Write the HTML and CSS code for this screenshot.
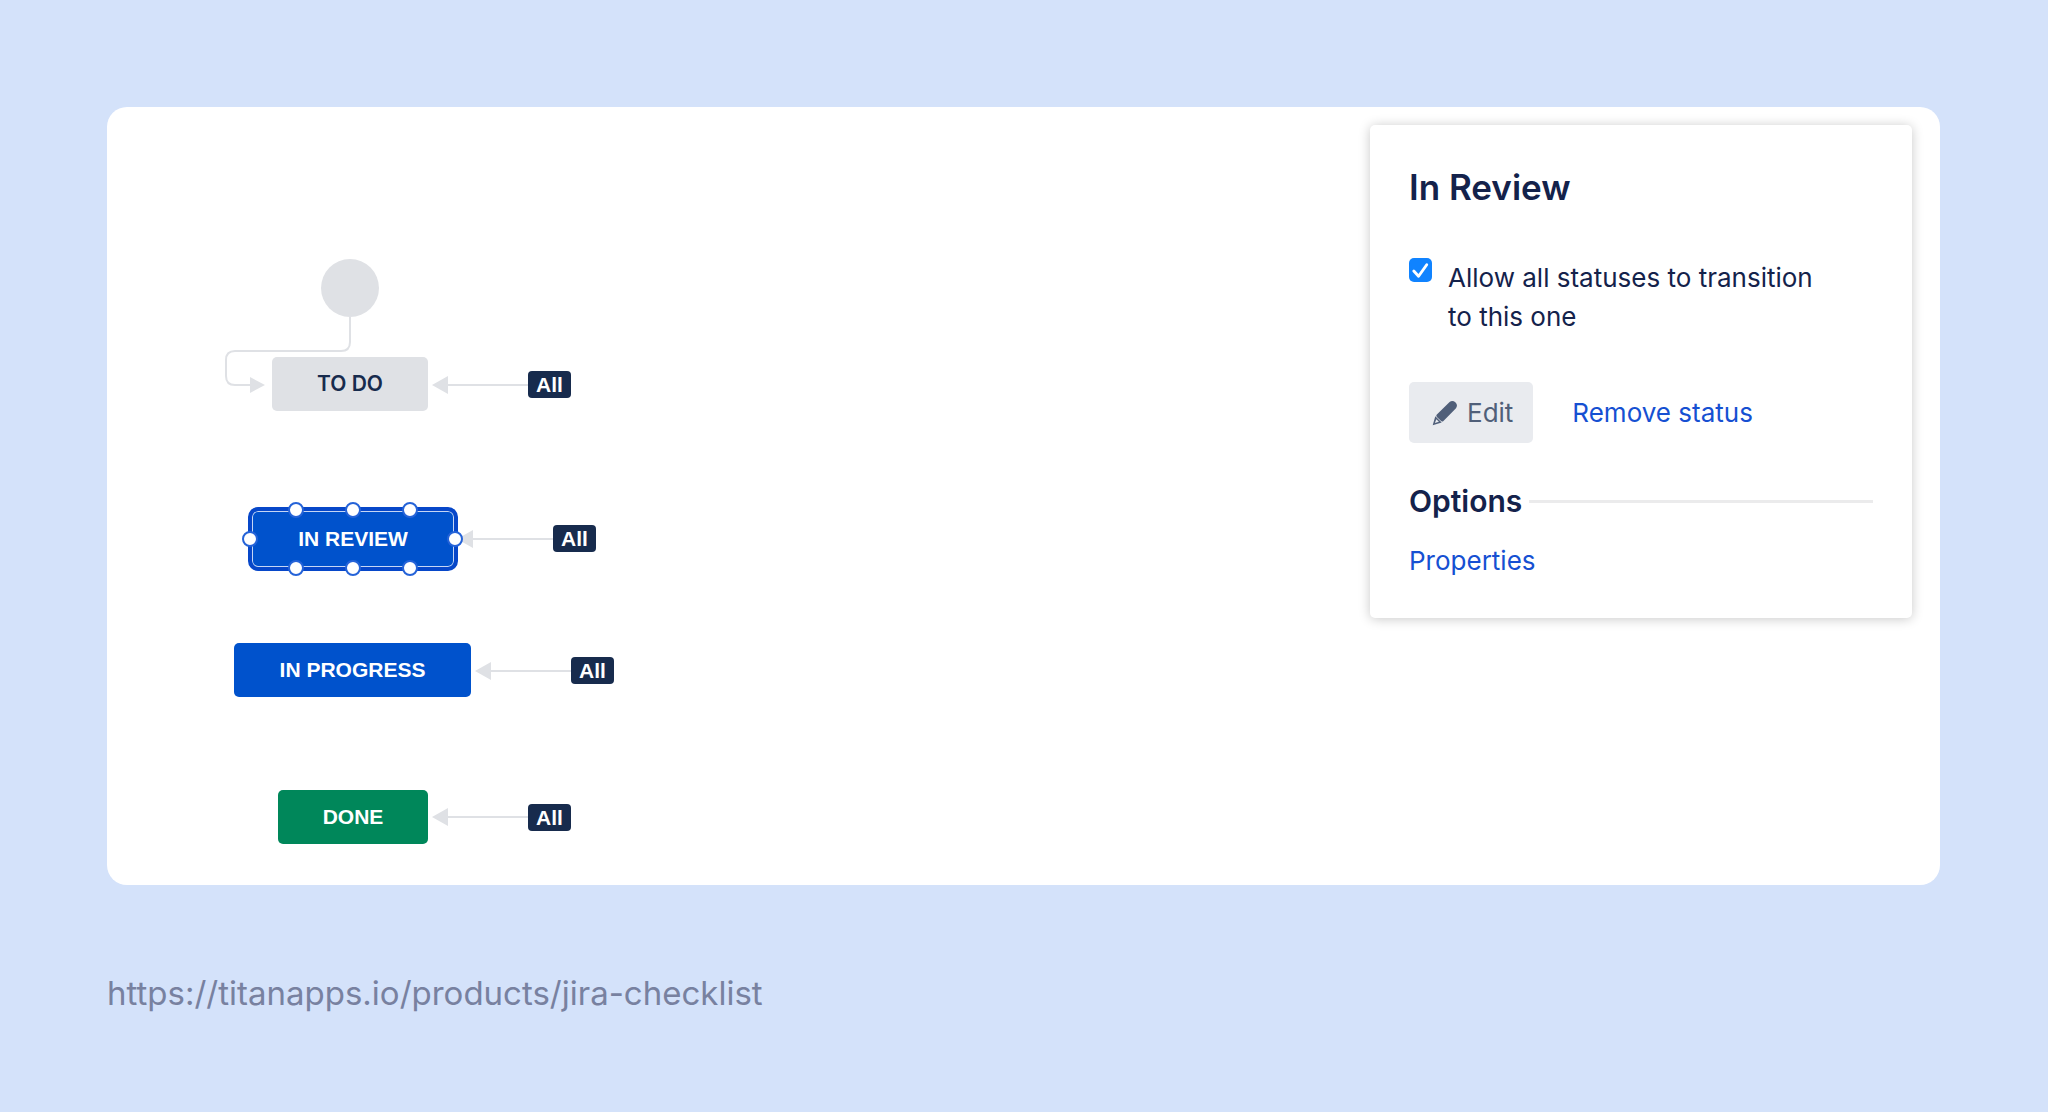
FILE: index.html
```html
<!DOCTYPE html>
<html lang="en">
<head>
<meta charset="utf-8">
<meta name="viewport" content="width=device-width, initial-scale=1">
<title>Workflow – In Review</title>
<link rel="stylesheet" href="styles.css">
</head>
<body>
<main class="board">
  <section class="canvas" aria-label="Workflow diagram">
    <svg class="edges" width="560" height="778" aria-hidden="true">
      <circle class="start" cx="243" cy="181" r="29"/>
      <path class="edge" d="M243 210V235Q243 244 234 244H128Q119 244 119 253V269Q119 278 128 278H143"/>
      <path class="head" d="M143 270L158 278L143 286Z"/>
      <path class="edge" d="M341 278H422M366 432H447M384 564H465M341 710H422"/>
      <path class="head" d="M325 278L341 269V287ZM350 432L366 423V441ZM368 564L384 555V573ZM325 710L341 701V719Z"/>
    </svg>

    <button class="node todo" type="button">TO DO</button>
    <button class="node review" type="button">IN REVIEW</button>
    <button class="node progress" type="button">IN PROGRESS</button>
    <button class="node done" type="button">DONE</button>

    <span class="all all-todo">All</span>
    <span class="all all-review">All</span>
    <span class="all all-progress">All</span>
    <span class="all all-done">All</span>

    <svg class="handles" width="226" height="78" aria-hidden="true">
      <circle cx="10" cy="39" r="7"/><circle cx="215" cy="39" r="7"/>
      <circle cx="56" cy="10" r="7"/><circle cx="113" cy="10" r="7"/><circle cx="170" cy="10" r="7"/>
      <circle cx="56" cy="68" r="7"/><circle cx="113" cy="68" r="7"/><circle cx="170" cy="68" r="7"/>
    </svg>
  </section>

  <aside class="panel">
    <h1 class="title">In Review</h1>
    <div class="check-row">
      <input class="check" type="checkbox" id="allow-all" checked>
      <label class="check-label" for="allow-all">Allow all statuses to transition to this one</label>
    </div>
    <div class="actions">
      <button class="edit" type="button">
        <svg class="pencil" width="26" height="26" viewBox="0 0 26 26" aria-hidden="true">
          <path d="M4.600 14.800L17.600 1.900Q20.500 -.2 23.600 2.400Q26.100 5.300 24 8.200L11.200 21.200Q9.800 21.900 8.800 20.800L4.900 16.900Q3.900 15.900 4.600 14.800Z"/>
          <path fill-rule="evenodd" d="M3.300 16.300L9.700 22.400L.7 25.200ZM4.300 19.200L2.900 22.900L6.900 21.700Z"/>
        </svg>
        Edit
      </button>
      <a class="link" href="#remove">Remove status</a>
    </div>
    <h2 class="options">Options</h2>
    <a class="link" href="#properties">Properties</a>
  </aside>
</main>
<footer class="footer">
  <a class="source" href="https://titanapps.io/products/jira-checklist">https://titanapps.io/products/jira-checklist</a>
</footer>
</body>
</html>
```

FILE: styles.css
```css
* { box-sizing: border-box; }

body {
  margin: 0;
  min-height: 100vh;
  padding: 107px 108px 0 107px;
  background: #d4e2fa;
  color: #14224b;
  font-family: Inter, "Liberation Sans", sans-serif;
}

.board {
  display: flex;
  justify-content: space-between;
  align-items: flex-start;
  min-height: 778px;
  padding-right: 28px;
  border-radius: 20px;
  background: #fff;
}

/* workflow diagram */
.canvas {
  position: relative;
  flex: 1;
  min-width: 560px;
  align-self: stretch;
}

.edges { position: absolute; left: 0; top: 0; }
.start, .head { fill: #dfe1e5; }
.edge { fill: none; stroke: #dfe1e5; stroke-width: 2; }

.node {
  position: absolute;
  height: 54px;
  padding: 0;
  border: 0;
  border-radius: 5px;
  color: #fff;
  font: bold 21px/54px "Liberation Sans", Arial, sans-serif;
}

.todo {
  left: 165px;
  top: 250px;
  width: 156px;
  background: #dfe1e5;
  color: #172b4d;
  font: 600 21px/54px Inter, sans-serif;
}

.review {
  left: 141px;
  top: 400px;
  width: 210px;
  height: 64px;
  border: 4px solid #0747c9;
  border-radius: 10px;
  background: #0052cc;
  box-shadow: inset 0 0 0 1px #c5d6f5;
}

.progress { left: 127px; top: 536px; width: 237px; background: #0052cc; }
.done { left: 171px; top: 683px; width: 150px; background: #00875a; }

.all {
  position: absolute;
  width: 43px;
  height: 27px;
  border-radius: 4px;
  background: #172b4d;
  color: #fff;
  font: bold 21px/27px "Liberation Sans", Arial, sans-serif;
  text-align: center;
}

.all-todo { left: 421px; top: 264px; }
.all-review { left: 446px; top: 418px; }
.all-progress { left: 464px; top: 550px; }
.all-done { left: 421px; top: 697px; }

.handles {
  position: absolute;
  left: 133px;
  top: 393px;
  fill: #fff;
  stroke: #2563d8;
  stroke-width: 2;
  pointer-events: none;
}

/* status details */
.panel {
  width: 542px;
  margin-top: 18px;
  padding: 40px 39px 38px;
  border-radius: 5px;
  background: #fff;
  box-shadow: 0 1px 12px rgba(0, 0, 0, .22);
}

.title {
  margin: 0;
  font-size: 35px;
  font-weight: 600;
  line-height: 44px;
}

.check-row {
  display: flex;
  align-items: flex-start;
  gap: 16px;
  margin-top: 49px;
}

.check {
  appearance: none;
  flex: none;
  width: 23px;
  height: 24px;
  margin: 0;
  border-radius: 5px;
  background: url("data:image/svg+xml,%3Csvg xmlns='http://www.w3.org/2000/svg' viewBox='0 0 24 24'%3E%3Cpath d='M5 12.500L10 18L18.500 6' fill='none' stroke='white' stroke-width='3' stroke-linecap='round' stroke-linejoin='round'/%3E%3C/svg%3E") center / 100% no-repeat #1083ff;
}

.check-label {
  max-width: 390px;
  font-size: 26px;
  line-height: 39px;
}

.actions {
  display: flex;
  align-items: center;
  gap: 39px;
  margin-top: 46px;
}

.edit {
  display: flex;
  align-items: center;
  gap: 9px;
  height: 61px;
  padding: 0 20px 0 23px;
  border: 0;
  border-radius: 5px;
  background: #e9ebef;
  color: #505f79;
  font: 26px/39px Inter, "Liberation Sans", sans-serif;
}

.pencil { flex: none; fill: #505f79; }

.link {
  color: #1650d2;
  font-size: 26px;
  line-height: 39px;
  text-decoration: none;
}

.options {
  display: flex;
  align-items: center;
  gap: 7px;
  margin: 39px 0 20px;
  font-size: 30px;
  font-weight: 600;
  line-height: 39px;
}

.options::after {
  content: "";
  flex: 1;
  height: 3px;
  background: #ebebec;
}

.footer { padding: 86px 0 60px; }

.source {
  color: #7881a0;
  font-size: 33px;
  line-height: 44px;
  text-decoration: none;
}
```
